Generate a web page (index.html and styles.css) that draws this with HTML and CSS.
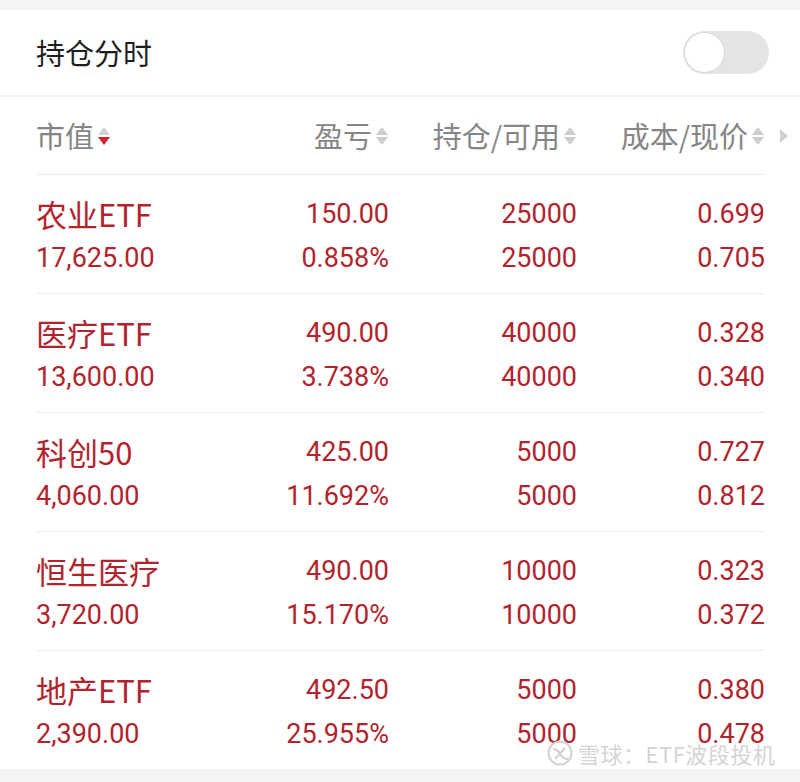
FILE: index.html
```html
<!DOCTYPE html>
<html lang="zh">
<head>
<meta charset="utf-8">
<link rel="stylesheet" href="styles.css">
</head>
<body>
<div class="page">
  <div class="topbar"></div>
  <div class="title-row">
    <span class="title">持仓分时</span>
    <span class="toggle"><span class="knob"></span></span>
  </div>
  <div class="sep"></div>
  <div class="table">
    <div class="head">
      <div class="hc left">市值<span class="sort"><i class="up"></i><i class="down active"></i></span></div>
      <div class="hc">盈亏<span class="sort"><i class="up"></i><i class="down"></i></span></div>
      <div class="hc">持仓/可用<span class="sort"><i class="up"></i><i class="down"></i></span></div>
      <div class="hc">成本/现价<span class="sort"><i class="up"></i><i class="down"></i></span></div>
      <span class="more"></span>
    </div>
    <div class="row">
      <div class="c name"><span class="nm">农业ETF</span><span>17,625.00</span></div>
      <div class="c"><span>150.00</span><span>0.858%</span></div>
      <div class="c"><span>25000</span><span>25000</span></div>
      <div class="c"><span>0.699</span><span>0.705</span></div>
    </div>
    <div class="row">
      <div class="c name"><span class="nm">医疗ETF</span><span>13,600.00</span></div>
      <div class="c"><span>490.00</span><span>3.738%</span></div>
      <div class="c"><span>40000</span><span>40000</span></div>
      <div class="c"><span>0.328</span><span>0.340</span></div>
    </div>
    <div class="row">
      <div class="c name"><span class="nm">科创50</span><span>4,060.00</span></div>
      <div class="c"><span>425.00</span><span>11.692%</span></div>
      <div class="c"><span>5000</span><span>5000</span></div>
      <div class="c"><span>0.727</span><span>0.812</span></div>
    </div>
    <div class="row">
      <div class="c name"><span class="nm">恒生医疗</span><span>3,720.00</span></div>
      <div class="c"><span>490.00</span><span>15.170%</span></div>
      <div class="c"><span>10000</span><span>10000</span></div>
      <div class="c"><span>0.323</span><span>0.372</span></div>
    </div>
    <div class="row last">
      <div class="c name"><span class="nm">地产ETF</span><span>2,390.00</span></div>
      <div class="c"><span>492.50</span><span>25.955%</span></div>
      <div class="c"><span>5000</span><span>5000</span></div>
      <div class="c"><span>0.380</span><span>0.478</span></div>
    </div>
  </div>
  <div class="bottombar"></div>
  <div class="watermark">
    <svg width="26" height="26" viewBox="0 0 26 26" fill="none" stroke="#d0d0d0" stroke-width="2">
      <circle cx="13" cy="13" r="11.5"/>
      <path d="M6 9 C9 9 12 12 14 15 C16 18 18 19 21 19"/>
      <path d="M8 19 L18 8"/>
    </svg>
    <span class="wm-text">雪球：ETF波段投机</span>
  </div>
</div>
</body>
</html>
```

FILE: styles.css
```css
* { box-sizing: border-box; margin: 0; padding: 0; }
html, body { background: #fff; }
body {
  width: 800px;
  height: 782px;
  overflow: hidden;
  font-family: "Noto Sans CJK SC", "Noto Sans", sans-serif;
}
.page { position: relative; width: 800px; height: 782px; display: flex; flex-direction: column; }
.topbar { height: 10px; background: #f4f4f4; flex: none; }
.title-row {
  height: 85px;
  flex: none;
  display: flex;
  align-items: center;
  justify-content: space-between;
  padding: 0 31px 0 36px;
}
.title { font-size: 29px; color: #1e1e1e; line-height: 1; }
.toggle {
  width: 86px;
  height: 43px;
  border-radius: 22px;
  background: #e4e4e4;
  display: flex;
  align-items: center;
  padding-left: 2px;
}
.knob {
  width: 39px;
  height: 39px;
  border-radius: 50%;
  background: #fff;
  box-shadow: 0 0 0 1px #d9d9d9;
}
.sep { height: 2px; background: #f2f2f2; flex: none; }
.table { padding: 0 35px 0 36px; flex: none; }
.head {
  position: relative;
  height: 78px;
  display: grid;
  grid-template-columns: 1fr 180px 188px 188px;
  align-items: center;
  border-bottom: 1px solid #ececec;
}
.hc {
  display: flex;
  align-items: center;
  justify-content: flex-end;
  font-size: 29px;
  color: #858585;
  line-height: 1;
}
.hc.left { justify-content: flex-start; }
.sort {
  display: inline-flex;
  flex-direction: column;
  gap: 2px;
  margin-left: 3px;
  width: 14px;
  align-items: center;
}
.sort i {
  width: 0;
  height: 0;
  border-left: 6px solid transparent;
  border-right: 6px solid transparent;
}
.sort .up { border-bottom: 8px solid #cfcfcf; }
.sort .down { border-top: 8px solid #cfcfcf; }
.sort .down.active { border-top-color: #d8202b; }
.more {
  position: absolute;
  right: -23px;
  top: 32px;
  width: 0;
  height: 0;
  border-top: 7px solid transparent;
  border-bottom: 7px solid transparent;
  border-left: 8px solid #cfcfcf;
}
.row {
  display: grid;
  grid-template-columns: 1fr 180px 188px 188px;
  padding: 17px 0 13px;
  border-bottom: 1px solid #ededed;
  height: 119px;
}
.row.last { border-bottom: none; height: 118px; }
.c {
  display: flex;
  flex-direction: column;
  align-items: flex-end;
  font-family: Roboto, "Noto Sans", sans-serif;
  font-size: 27px;
  color: #b2242d;
}
.c span { height: 44px; line-height: 44px; white-space: nowrap; }
.c.name { align-items: flex-start; }
.c.name .nm {
  font-family: "Noto Sans CJK SC", "Noto Sans", sans-serif;
  font-size: 31px;
}
.bottombar { flex: 1; background: #f4f4f4; }
.watermark {
  position: absolute;
  left: 547px;
  top: 738px;
  display: flex;
  align-items: center;
  gap: 5px;
  white-space: nowrap;
}
.wm-text {
  color: #d4d4d4;
  font-size: 22px;
  line-height: 30px;
  letter-spacing: 0.5px;
  text-shadow: 1px 1px 0 #fff, -1px -1px 0 #fff;
}
```
